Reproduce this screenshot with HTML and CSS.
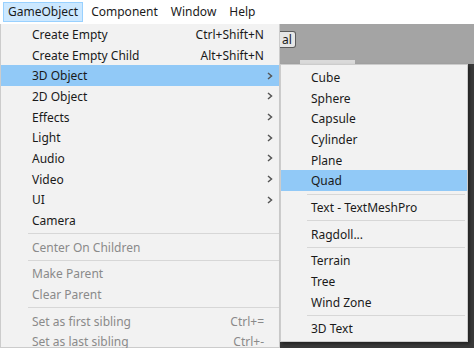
FILE: index.html
```html
<!DOCTYPE html>
<html lang="en">
    <head>
        <meta charset="UTF-8" />
        <meta name="viewport" content="width=device-width, initial-scale=1.0" />
        <title>GameObject menu</title>
        <link rel="stylesheet" href="styles.css">
    </head>
    <body>
        <div class="menubar">
            <span class="top-item active">GameObject</span>
            <span class="top-item">Component</span>
            <span class="top-item">Window</span>
            <span class="top-item">Help</span>
        </div>
        <div class="stage">
            <ul class="menu main">
                <li class="item"><span class="label">Create Empty</span><span class="key">Ctrl+Shift+N</span></li>
                <li class="item"><span class="label">Create Empty Child</span><span class="key">Alt+Shift+N</span></li>
                <li class="item hover"><span class="label">3D Object</span><svg class="arrow" viewBox="0 0 6 8"><polyline points="1,1 4.5,4 1,7" /></svg></li>
                <li class="item"><span class="label">2D Object</span><svg class="arrow" viewBox="0 0 6 8"><polyline points="1,1 4.5,4 1,7" /></svg></li>
                <li class="item"><span class="label">Effects</span><svg class="arrow" viewBox="0 0 6 8"><polyline points="1,1 4.5,4 1,7" /></svg></li>
                <li class="item"><span class="label">Light</span><svg class="arrow" viewBox="0 0 6 8"><polyline points="1,1 4.5,4 1,7" /></svg></li>
                <li class="item"><span class="label">Audio</span><svg class="arrow" viewBox="0 0 6 8"><polyline points="1,1 4.5,4 1,7" /></svg></li>
                <li class="item"><span class="label">Video</span><svg class="arrow" viewBox="0 0 6 8"><polyline points="1,1 4.5,4 1,7" /></svg></li>
                <li class="item"><span class="label">UI</span><svg class="arrow" viewBox="0 0 6 8"><polyline points="1,1 4.5,4 1,7" /></svg></li>
                <li class="item"><span class="label">Camera</span></li>
                <li class="sep"></li>
                <li class="item off"><span class="label">Center On Children</span></li>
                <li class="sep"></li>
                <li class="item off"><span class="label">Make Parent</span></li>
                <li class="item off"><span class="label">Clear Parent</span></li>
                <li class="sep"></li>
                <li class="item off"><span class="label">Set as first sibling</span><span class="key">Ctrl+=</span></li>
                <li class="item off"><span class="label">Set as last sibling</span><span class="key">Ctrl+-</span></li>
            </ul>
            <div class="editor">
                <div class="toolbar"><span class="toggle">al</span></div>
                <div class="tabstrip"><span class="tab"></span></div>
                <div class="scene"></div>
                <ul class="menu sub">
                    <li class="item"><span class="label">Cube</span></li>
                    <li class="item"><span class="label">Sphere</span></li>
                    <li class="item"><span class="label">Capsule</span></li>
                    <li class="item"><span class="label">Cylinder</span></li>
                    <li class="item"><span class="label">Plane</span></li>
                    <li class="item hover"><span class="label">Quad</span></li>
                    <li class="sep"></li>
                    <li class="item"><span class="label">Text - TextMeshPro</span></li>
                    <li class="sep"></li>
                    <li class="item"><span class="label">Ragdoll...</span></li>
                    <li class="sep"></li>
                    <li class="item"><span class="label">Terrain</span></li>
                    <li class="item"><span class="label">Tree</span></li>
                    <li class="item"><span class="label">Wind Zone</span></li>
                    <li class="sep"></li>
                    <li class="item"><span class="label">3D Text</span></li>
                </ul>
            </div>
        </div>
    </body>
</html>
```

FILE: styles.css
```css
body {
    margin: 0;
    width: 474px;
    height: 348px;
    overflow: hidden;
    background: #ffffff;
    font-family: "Noto Sans", "Open Sans", sans-serif;
    font-size: 12px;
    color: #1a1a1a;
}
.menubar {
    height: 24px;
    display: flex;
    align-items: center;
    gap: 3px;
    padding-left: 3px;
    background: #ffffff;
}
.top-item {
    box-sizing: border-box;
    height: 20px;
    line-height: 18px;
    padding: 0 4px;
    border: 1px solid transparent;
}
.top-item.active {
    background: #cce8ff;
    border-color: #99d1ff;
}
.stage {
    display: flex;
    height: 324px;
}
.menu {
    list-style: none;
    margin: 0;
    box-sizing: border-box;
    background: #f2f2f2;
    border: 1px solid #cccccc;
}
.main {
    width: 280px;
    flex-shrink: 0;
    padding: 0;
    border-top: none;
}
.item {
    display: flex;
    align-items: center;
    height: 20.7px;
    padding-left: 31px;
}
.item .label {
    flex: 1;
    white-space: nowrap;
}
.item .key {
    margin-right: 15px;
}
.item.hover {
    background: #91c9f7;
}
.item.off {
    color: #8a8a8a;
}
.arrow {
    width: 6px;
    height: 8px;
    margin-right: 6px;
    fill: none;
    stroke: #555555;
    stroke-width: 1.5;
}
.sep {
    height: 6px;
    display: flex;
    align-items: center;
    padding-left: 27px;
}
.sep::after {
    content: "";
    flex: 1;
    height: 1px;
    background: #d7d7d7;
}
.editor {
    flex: 1;
    position: relative;
    display: flex;
    flex-direction: column;
    background: #3a3a3a;
}
.toolbar {
    height: 36px;
    box-sizing: border-box;
    padding-top: 7px;
    background: #a4a4a4;
}
.toggle {
    display: inline-block;
    box-sizing: border-box;
    height: 17px;
    line-height: 15px;
    padding: 0 3px 0 2px;
    background: #e6e6e6;
    border: 1px solid #5c5c5c;
    border-left: none;
    border-radius: 0 3px 3px 0;
}
.tabstrip {
    height: 4px;
    background: #a4a4a4;
}
.tab {
    display: block;
    width: 55px;
    height: 4px;
    margin-left: 20px;
    background: #dadada;
}
.scene {
    flex: 1;
    background: #3a3a3a;
}
.sub {
    position: absolute;
    top: 40px;
    left: 0;
    width: 188px;
    padding: 2px 0;
    box-shadow: 2px 2px 3px rgba(0, 0, 0, 0.4);
}
.sub .item {
    padding-left: 30px;
}
.sub .sep {
    padding-left: 26px;
    padding-right: 2px;
}
```
